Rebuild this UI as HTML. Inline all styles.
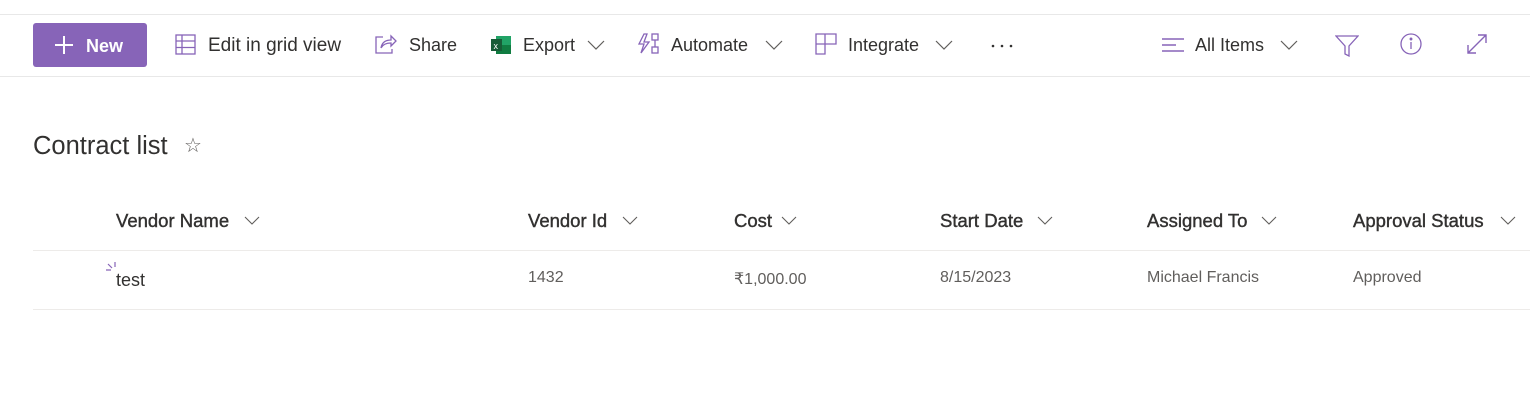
<!DOCTYPE html><html><head><style>
body{margin:0;width:1530px;height:402px;background:#fff;font-family:"Liberation Sans",sans-serif;color:#323130;position:relative;overflow:hidden}
.a{position:absolute;white-space:nowrap}
.t{font-size:18px;top:35px}
svg{position:absolute}
.h{font-size:18.5px;top:210px;color:#323130;-webkit-text-stroke:0.4px #323130}
.c{font-size:16px;top:269px;color:#605e5c}
</style></head><body>
<div class="a" style="left:0;top:14px;width:1530px;height:1px;background:#e8e8e8"></div>
<div class="a" style="left:0;top:76px;width:1530px;height:1px;background:#e8e8e8"></div>
<div class="a" style="left:33px;top:23px;width:114px;height:44px;background:#8764b8;border-radius:3px"></div>
<svg style="left:54px;top:35px" width="20" height="20"><path d="M10 1v18M1 10h18" stroke="#fff" stroke-width="2"/></svg>
<div class="a t" style="left:86px;color:#fff;font-weight:bold;top:36px;font-size:18px">New</div>
<svg style="left:175px;top:34px" width="21" height="21" fill="none" stroke="#8764b8" stroke-width="1.3"><rect x="1" y="1" width="19" height="19"/><path d="M1 7h19M1 13.5h19M7 1v19"/></svg>
<div class="a t" style="left:208px;font-size:19px;top:35px">Edit in grid view</div>
<svg style="left:375px;top:34px" width="22" height="20" fill="none" stroke="#8764b8" stroke-width="1.3"><path d="M8 3H1v16h16v-4M6 14c1-6 5-8 10-8V2l5 5-5 5V9c-4 0-8 1-10 5z"/></svg>
<div class="a t" style="left:409px">Share</div>
<svg style="left:490px;top:35px" width="22" height="20"><rect x="6" y="1" width="15" height="18" fill="#21a366"/><rect x="6" y="10" width="15" height="9" fill="#107c41"/><rect x="1" y="4" width="11" height="12" fill="#185c37"/><text x="3.5" y="14" font-size="9" fill="#fff" font-family="Liberation Sans">x</text></svg>
<div class="a t" style="left:523px">Export</div>
<svg style="left:587px;top:40px" width="18" height="10" fill="none" stroke="#605e5c" stroke-width="1.2"><path d="M1 1l8 8 8-8"/></svg>
<svg style="left:637px;top:33px" width="24" height="22" fill="none" stroke="#8764b8" stroke-width="1.3"><path d="M7 1L2 11h5l-3 9 8-11H7l3-8z"/><rect x="15" y="1" width="6" height="6"/><rect x="15" y="14" width="6" height="6"/><path d="M18 7v7"/></svg>
<div class="a t" style="left:671px">Automate</div>
<svg style="left:765px;top:40px" width="18" height="10" fill="none" stroke="#605e5c" stroke-width="1.2"><path d="M1 1l8 8 8-8"/></svg>
<svg style="left:815px;top:33px" width="22" height="22" fill="none" stroke="#8764b8" stroke-width="1.3"><path d="M1 1h9v20H1zM10 1h11v10H10zM1 11h9"/></svg>
<div class="a t" style="left:848px">Integrate</div>
<svg style="left:935px;top:40px" width="18" height="10" fill="none" stroke="#605e5c" stroke-width="1.2"><path d="M1 1l8 8 8-8"/></svg>
<svg style="left:990px;top:43px" width="24" height="6" fill="#323130"><circle cx="3" cy="3" r="1.3"/><circle cx="12" cy="3" r="1.3"/><circle cx="21" cy="3" r="1.3"/></svg>
<svg style="left:1162px;top:37px" width="22" height="16" stroke="#8764b8" stroke-width="1.4"><path d="M0 2h22M0 8h14M0 14h22"/></svg>
<div class="a t" style="left:1195px">All Items</div>
<svg style="left:1280px;top:40px" width="18" height="10" fill="none" stroke="#605e5c" stroke-width="1.2"><path d="M1 1l8 8 8-8"/></svg>
<svg style="left:1335px;top:35px" width="24" height="22" fill="none" stroke="#8764b8" stroke-width="1.3"><path d="M1 1h22l-9 10v10l-4-2v-8z"/></svg>
<svg style="left:1400px;top:33px" width="22" height="22" fill="none" stroke="#8764b8" stroke-width="1.3"><circle cx="11" cy="11" r="10"/><path d="M11 9v7"/><circle cx="11" cy="6" r=".8" fill="#8764b8"/></svg>
<svg style="left:1466px;top:33px" width="22" height="22" fill="none" stroke="#8764b8" stroke-width="1.4"><path d="M2 20L20 2M12 2h8v8M2 12v8h8"/></svg>
<div class="a" style="left:33px;top:132px;font-size:25.5px;color:#323130">Contract list</div>
<div class="a" style="left:184px;top:133px;font-size:20px;color:#605e5c">☆</div>
<div class="a h" style="left:116px">Vendor Name</div>
<div class="a h" style="left:528px">Vendor Id</div>
<div class="a h" style="left:734px">Cost</div>
<div class="a h" style="left:940px">Start Date</div>
<div class="a h" style="left:1147px">Assigned To</div>
<div class="a h" style="left:1353px">Approval Status</div>
<svg style="left:244px;top:216px" width="16" height="9" fill="none" stroke="#605e5c" stroke-width="1.1"><path d="M1 1l7 7 7-7"/></svg>
<svg style="left:622px;top:216px" width="16" height="9" fill="none" stroke="#605e5c" stroke-width="1.1"><path d="M1 1l7 7 7-7"/></svg>
<svg style="left:781px;top:216px" width="16" height="9" fill="none" stroke="#605e5c" stroke-width="1.1"><path d="M1 1l7 7 7-7"/></svg>
<svg style="left:1037px;top:216px" width="16" height="9" fill="none" stroke="#605e5c" stroke-width="1.1"><path d="M1 1l7 7 7-7"/></svg>
<svg style="left:1261px;top:216px" width="16" height="9" fill="none" stroke="#605e5c" stroke-width="1.1"><path d="M1 1l7 7 7-7"/></svg>
<svg style="left:1500px;top:216px" width="16" height="9" fill="none" stroke="#605e5c" stroke-width="1.1"><path d="M1 1l7 7 7-7"/></svg>
<div class="a" style="left:33px;top:250px;width:1497px;height:1px;background:#edebe9"></div>
<div class="a" style="left:33px;top:309px;width:1497px;height:1px;background:#edebe9"></div>
<svg style="left:105px;top:261px" width="12" height="10" fill="none" stroke="#8764b8" stroke-width="1.2"><path d="M1 9h5M3 3l4 4M10 1v5"/></svg>
<div class="a" style="left:116px;top:270px;font-size:18px;color:#323130">test</div>
<div class="a c" style="left:528px">1432</div>
<div class="a c" style="left:734px">₹1,000.00</div>
<div class="a c" style="left:940px">8/15/2023</div>
<div class="a c" style="left:1147px">Michael Francis</div>
<div class="a c" style="left:1353px">Approved</div>
</body></html>
